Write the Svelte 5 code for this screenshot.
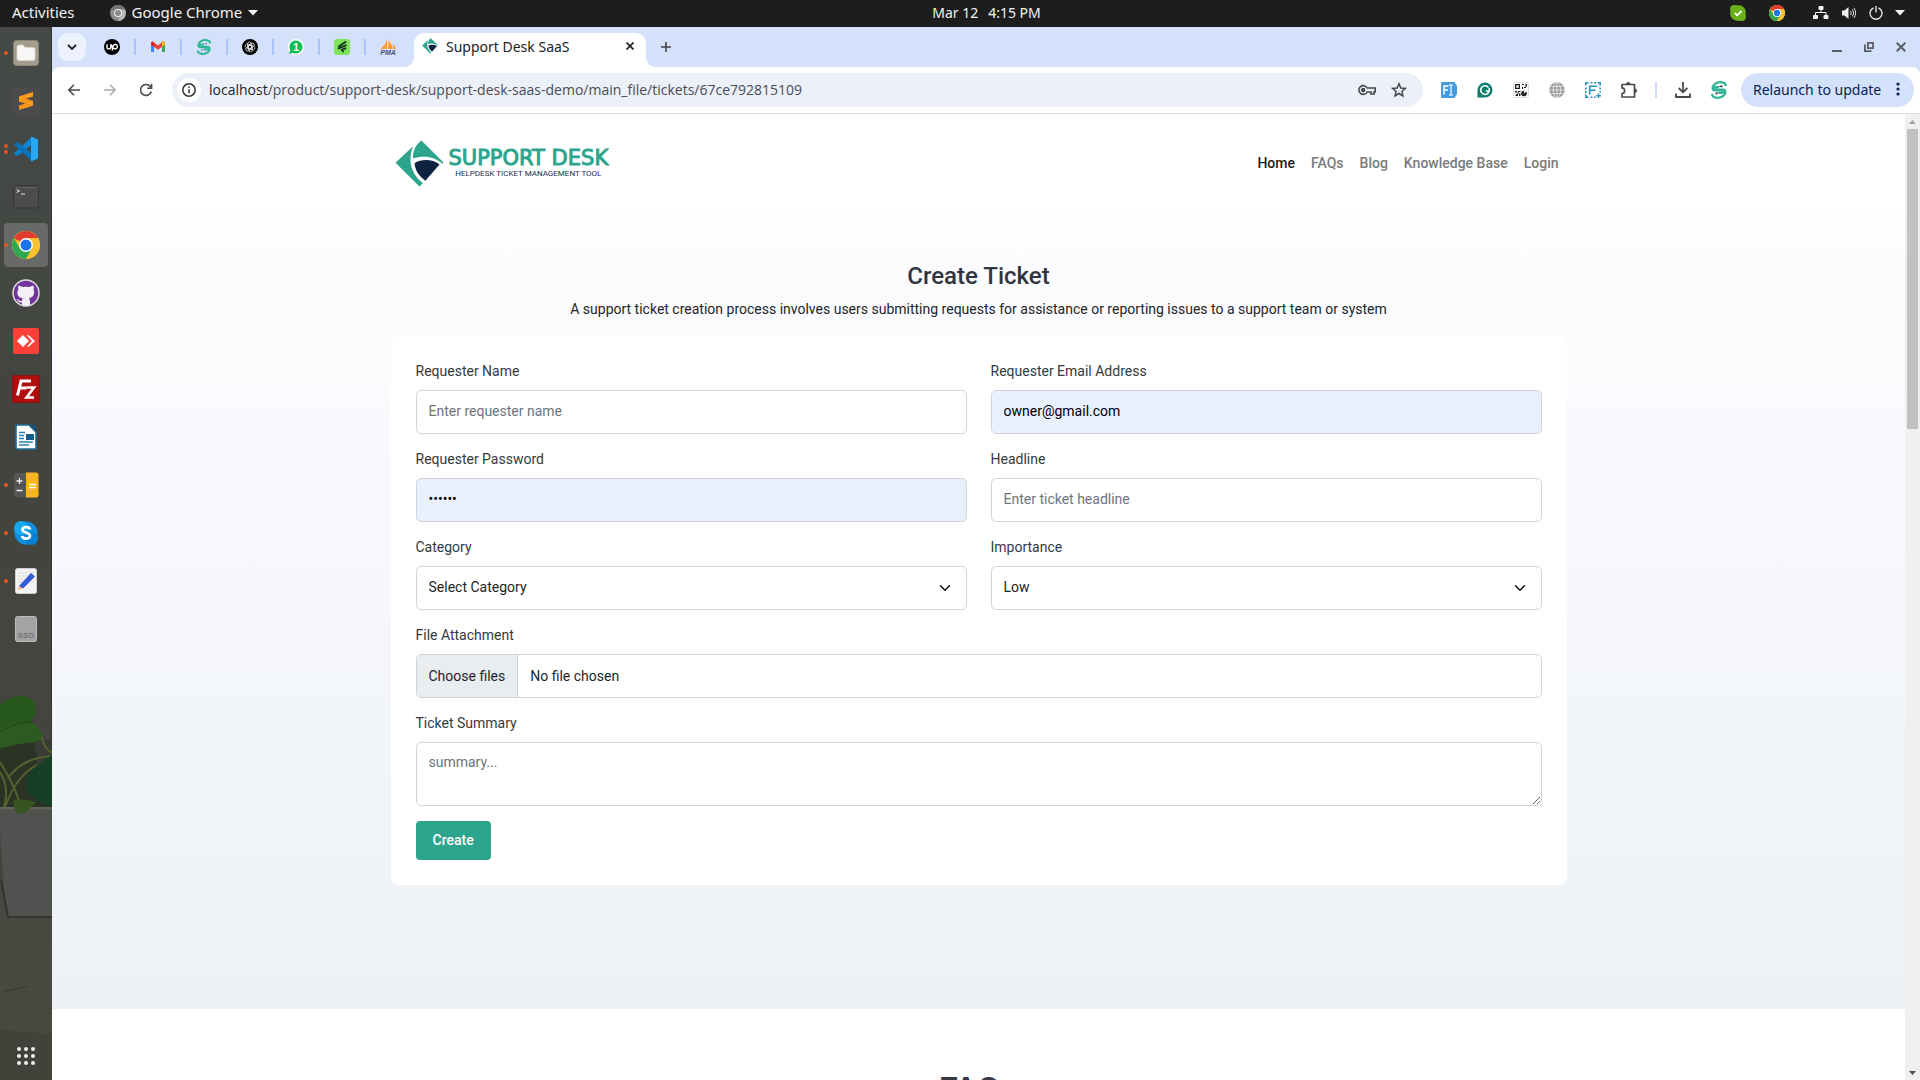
<script lang="ts">
  const pinned = ["upwork", "gmail", "sdesk", "gpt", "whatsapp", "envato", "pma"];

  const dock = [
    { name: "files", dots: 1 },
    { name: "sublime", dots: 0 },
    { name: "vscode", dots: 2 },
    { name: "terminal", dots: 0 },
    { name: "chrome", dots: 1 },
    { name: "github", dots: 0 },
    { name: "anydesk", dots: 0 },
    { name: "filezilla", dots: 0 },
    { name: "writer", dots: 0 },
    { name: "calculator", dots: 1 },
    { name: "skype", dots: 1 },
    { name: "editor", dots: 1 },
    { name: "ssd", dots: 0 },
  ];

  const extensions = ["fonts", "grammar", "qr", "globe", "capture", "puzzle"];
  const nav = ["Home", "FAQs", "Blog", "Knowledge Base", "Login"];

  let name = $state("");
  let email = $state("owner@gmail.com");
  let password = $state("secret");
  let headline = $state("");
  let category = $state("");
  let importance = $state("low");
  let summary = $state("");
  let fileLabel = $state("No file chosen");

  function onFiles(e: Event) {
    const files = (e.currentTarget as HTMLInputElement).files;
    if (!files || files.length === 0) fileLabel = "No file chosen";
    else fileLabel = files.length === 1 ? files[0].name : `${files.length} files`;
  }
</script>

{#snippet chrome(size)}
  <svg width={size} height={size} viewBox="0 0 28 28" aria-hidden="true">
    <circle cx="14" cy="14" r="14" fill="#fbc02d" />
    <path d="M14 14 1.9 7A14 14 0 0 1 26.1 7Z" fill="#e33b2e" />
    <path d="M1.9 7A14 14 0 0 0 14 28L20.1 17.5 14 14 7.9 17.5Z" fill="#2da94f" />
    <path d="M14 7H26.1A14 14 0 0 1 14 28L20.1 17.5Z" fill="#fbc02d" />
    <circle cx="14" cy="14" r="7" fill="#fff" />
    <circle cx="14" cy="14" r="5.5" fill="#1a73e8" />
  </svg>
{/snippet}

{#snippet mark(size)}
  <svg width={size} height={size} viewBox="0 0 49 48" aria-hidden="true">
    <path d="M27 0 49 22V24C41 16.500 29 14.500 18.500 18.500C18 12 20 5 27 0Z" fill="#2da58e" />
    <path d="M18.500 6 .5 22.700 25 47 28.500 43.500C18 36 12 22 18.500 6Z" fill="#2da58e" />
    <path d="M20 23.300C26 19 38 18.500 45.500 24.500L31 41C25 37 20.500 31 20 23.300Z" fill="#0d2240" />
  </svg>
{/snippet}

{#snippet sglyph(size, ink)}
  <svg width={size} height={size} viewBox="0 0 16 16" fill="none" stroke="#31b596" stroke-width="2" aria-hidden="true">
    <path d="M14 4.500C14.500.500 8 .500 5 2.200 1.500 4.500 1.500 8.300 4.500 8.300H11.500C13 8.300 13 10.300 11 10.500H8" />
    <path d="M2 11.500C1.500 15.500 8 15.500 11 13.800 14.500 11.500 14.500 7.700 11.500 7.700H4.500C3 7.700 3 5.700 5 5.500H8" />
    <path d="M7.500 4.800 11 3.500V5.800ZM5 10.200H8.500L5 12.500Z" fill={ink} stroke="none" />
  </svg>
{/snippet}

{#snippet favicon(id)}
  {#if id === "upwork"}
    <svg width="16" height="16" viewBox="0 0 16 16"><circle cx="8" cy="8" r="8" fill="#000" /><path d="M3 5.300V8a1.900 1.900 0 0 0 3.800 0V5.300C7.500 7.500 8.500 9.200 10.500 9.700A2.200 2.200 0 1 0 9 7.300L8.200 11.700" fill="none" stroke="#fff" stroke-width="1.400" /></svg>
  {:else if id === "gmail"}
    <svg width="16" height="16" viewBox="0 0 16 16"><path d="M1 4V13H4V5Z" fill="#4285f4" /><path d="M15 4V13H12V5Z" fill="#34a853" /><path d="M1 3.500 2.500 2 8 6.500 13.500 2 15 3.500V5.500L8 10.700 1 5.500Z" fill="#ea4335" /><path d="M12 3.300 13.500 2 15 3.500V5.500L12 7.700Z" fill="#fbbc04" /><path d="M1 3.500 4 4V7.700L1 5.500Z" fill="#c5221f" /></svg>
  {:else if id === "sdesk"}
    {@render sglyph(16, "#7a9ab5")}
  {:else if id === "gpt"}
    <svg width="16" height="16" viewBox="0 0 16 16"><circle cx="8" cy="8" r="8" fill="#000" /><g fill="none" stroke="#ddd" stroke-width=".8"><rect x="5.500" y="3" width="4" height="7" rx="2" /><rect x="5.500" y="3" width="4" height="7" rx="2" transform="rotate(60 8 8)" /><rect x="5.500" y="3" width="4" height="7" rx="2" transform="rotate(120 8 8)" /><rect x="5.500" y="3" width="4" height="7" rx="2" transform="rotate(180 8 8)" /><rect x="5.500" y="3" width="4" height="7" rx="2" transform="rotate(240 8 8)" /><rect x="5.500" y="3" width="4" height="7" rx="2" transform="rotate(300 8 8)" /></g></svg>
  {:else if id === "whatsapp"}
    <svg width="16" height="16" viewBox="0 0 16 16"><circle cx="8" cy="8" r="8" fill="#fff" /><path d="M8 1.500A6.500 6.500 0 1 1 4.800 13.700L1 15 2.300 11.200A6.500 6.500 0 0 1 8 1.500Z" fill="#06c152" /><text x="8" y="12" text-anchor="middle" font-family="Liberation Sans, sans-serif" font-size="11" font-weight="700" fill="#fff">1</text></svg>
  {:else if id === "envato"}
    <svg width="16" height="16" viewBox="0 0 16 16"><rect width="16" height="16" rx="3" fill="#80e35a" /><path d="M11.500 3 5 7.200M11.800 6.300 4.500 9.300M11.500 9.300 7.500 10.800M7.800 10.800 9 12.500" fill="none" stroke="#12351c" stroke-width="1.800" stroke-linecap="round" /></svg>
  {:else}
    <svg width="18" height="16" viewBox="0 0 18 16"><path d="M8 0V10H1C4 8 7 5 8 0ZM9.500 2C12 4 13.500 7 13.500 10H9ZM14 5C15.500 6.500 16.500 8 17 10H14Z" fill="#f89c3a" /><text x="9" y="15.500" text-anchor="middle" font-family="Liberation Sans, sans-serif" font-size="7" font-weight="700" font-style="italic" fill="#4a4f77">PMA</text></svg>
  {/if}
{/snippet}

{#snippet extension(id)}
  {#if id === "fonts"}
    <svg width="16" height="16" viewBox="0 0 16 16"><path d="M1 0H13.500L16 4V12L13.500 16H1Q0 16 0 15V1Q0 0 1 0Z" fill="#459bdc" /><path d="M3 12.500V4H7.500M3 8H7" stroke="#fff" stroke-width="1.500" fill="none" /><path d="M8 3H12M8 13H12M10 3V13" stroke="#fff" stroke-width="1.200" fill="none" /></svg>
  {:else if id === "grammar"}
    <svg width="16" height="16" viewBox="0 0 16 16"><path d="M8 .5A7.500 7.500 0 1 1 8 15.500H.5V8A7.500 7.500 0 0 1 8 .5Z" fill="#0b7f6b" /><path d="M11.500 5.500A4.300 4.300 0 1 0 12.200 9H8.800M12.200 6V9" stroke="#fff" stroke-width="1.600" fill="none" /></svg>
  {:else if id === "qr"}
    <svg width="16" height="16" viewBox="0 0 16 16"><rect x=".5" y=".5" width="15" height="15" rx="1" fill="#fafafa" stroke="#ddd" /><g fill="#222"><path d="M2 2H7V7H2ZM3.300 3.300V5.700H5.700V3.300Z" fill-rule="evenodd" /><path d="M9 2H11V3H9ZM9 5H10V7H9ZM12.500 2H14V4.500H13V6H11V5H12.500ZM2 9H4V10.500H2ZM5 9H7.500V10H5ZM3 12H5V14H2.500ZM6 11.500H7.500V14H6ZM4 10.500H6V11.500H4Z" /><circle cx="11" cy="11.500" r="2.800" /></g><path d="M11 11.500V8L14 9Z" fill="#fafafa" /></svg>
  {:else if id === "globe"}
    <svg width="16" height="16" viewBox="0 0 16 16"><circle cx="8" cy="8" r="7.700" fill="#9a9a9a" /><g fill="none" stroke="#e4e4e4" stroke-width=".9"><ellipse cx="8" cy="8" rx="3.700" ry="7.500" /><path d="M8 .5V15.500M.5 8H15.500M1.500 4.500H14.500M1.500 11.500H14.500" /></g></svg>
  {:else if id === "capture"}
    <svg width="16" height="16" viewBox="0 0 16 16" fill="none" stroke="#2894ba" stroke-width="1.600"><path d="M.8 3.500V.8H3.500M5.500.8H7.500M9 .8H11M12.500.8H15.200V3.500M15.200 5.500V7.500M15.200 9V10.500M.8 5.500V7.500M.8 9V11M.8 12.500V15.200H3.500M5.500 15.200H7.500M9 15.200H10.500" /><path d="M4.700 12.500V4.300H12M4.700 8.200H10.500" /><path d="M13.500 11.500V16M11.200 13.700H16" stroke-width="1.400" /></svg>
  {:else}
    <svg width="18" height="18" viewBox="0 0 18 18" fill="none" stroke="#47494d" stroke-width="1.700"><path d="M2 3.500H14.500V16H2V12.600C5.500 12.300 5.500 7.200 2 6.900Z" stroke-linejoin="round" /><path d="M6.300 3.500A2 2 0 0 1 10.300 3.500ZM14.500 7.800A2 2 0 0 1 14.500 11.800Z" fill="#47494d" stroke-width="1" /></svg>
  {/if}
{/snippet}

{#snippet app(id)}
  {#if id === "files"}
    <svg width="26" height="26" viewBox="0 0 26 26"><rect x=".5" y=".5" width="25" height="25" rx="3" fill="#a49d8d" stroke="#8b8475" /><path d="M4 7Q4 5 6 5H10L12 7.500H20Q22 7.500 22 9.500V18.500Q22 20.500 20 20.500H6Q4 20.500 4 18.500Z" fill="#f7f6f4" stroke="#d8d3c9" /></svg>
  {:else if id === "sublime"}
    <svg width="28" height="28" viewBox="0 0 28 28"><rect width="28" height="28" rx="2" fill="#4b4a4c" /><path d="M21 5 7 9.500V14.500L21 19V14L13.500 11.700 21 9.500Z" fill="#ff9c1c" /><path d="M7 14.300 21 18.500V14L14 11.800ZM21 14V18.700L7 23V18.500L14 16.200Z" fill="#f7941e" /></svg>
  {:else if id === "vscode"}
    <svg width="26" height="26" viewBox="0 0 26 26"><path d="M18.500 1 1 17.500 3 19.500 4.500 20 19 8.500Z" fill="#0b83cf" /><path d="M18.500 25 1 8.500 3 6.500 4.500 6 19 17.500Z" fill="#0a73b8" /><path d="M19 8.500V1L25 3.500V22.500L19 25V17.500Z" fill="#2aa7f2" /><path d="M18 1 19.500.5V25.500L18 25Z" fill="#2aa7f2" /></svg>
  {:else if id === "terminal"}
    <svg width="26" height="24" viewBox="0 0 26 24"><rect x=".5" y="1" width="25" height="22" rx="2" fill="#4c4c4c" stroke="#353535" /><path d="M1.500 2.500H24.500" stroke="#666" /><path d="M3.500 4.500 6.500 6 3.500 7.500M8 9H12" stroke="#ddd" fill="none" /></svg>
  {:else if id === "chrome"}
    {@render chrome(28)}
  {:else if id === "github"}
    <svg width="28" height="28" viewBox="0 0 28 28"><circle cx="14" cy="14" r="13" fill="#70349a" stroke="#ddd" stroke-width="1.500" /><path d="M6.500 6.500 11 8Q14 7.300 17 8L21.500 6.500Q22.300 9 21.500 10.500 23 15 20.500 17.500 18.500 19 17 19.300L18 22V26Q14 27.500 10 26V23.500Q7 24 6 22L4.500 20.300Q6.500 20 8 22L10 21.700 10.500 19.300Q4.500 18.500 5.500 12L6.400 10.500Q5.700 9 6.500 6.500Z" fill="#f3eff5" /></svg>
  {:else if id === "anydesk"}
    <svg width="26" height="26" viewBox="0 0 26 26"><rect width="26" height="26" rx="2" fill="#fb4137" /><path d="M4 13 10 7 16 13 10 19Z" fill="#fff" /><path d="M14 7.500 15.500 7 22 13 15.500 19 14 18.500 19 13Z" fill="#fff" /></svg>
  {:else if id === "filezilla"}
    <svg width="28" height="28" viewBox="0 0 28 28"><rect x=".5" y=".5" width="27" height="27" fill="#b00d0d" stroke="#8f0a0a" stroke-dasharray="2 1" /><g fill="none" stroke="#fff" stroke-width="3"><path d="M5.500 20.500 9 6H19M7.500 13H14.500" /><path d="M14.500 12.500H22L14.500 22.500H22" stroke-width="2.600" /></g></svg>
  {:else if id === "writer"}
    <svg width="24" height="26" viewBox="0 0 24 26"><path d="M3 1H15L22 8V24Q22 25 21 25H3Q2 25 2 24V2Q2 1 3 1Z" fill="#fff" stroke="#1f6b99" stroke-width="1.600" /><path d="M15 1H22V8Z" fill="#165379" /><path d="M5 8.500H11M5 11.500H10M5 14.500H10M5 18H19M5 21H15" stroke="#2f82b1" stroke-width="1.400" /><rect x="12" y="10" width="8" height="6" fill="#175c88" /></svg>
  {:else if id === "calculator"}
    <svg width="26" height="26" viewBox="0 0 26 26"><rect x=".5" y=".5" width="25" height="25" rx="3" fill="#565656" stroke="#444" /><path d="M13 .5H23Q25.500.5 25.500 3V23Q25.500 25.500 23 25.500H13Z" fill="#fbb51c" /><path d="M1 13H13" stroke="#444" /><path d="M6.500 6V12M3.500 9H9.500M3.500 18.500H9.500" stroke="#eee" stroke-width="1.300" /><path d="M16 12.500H23M16 15.500H23" stroke="#fff" stroke-width="1.300" /></svg>
  {:else if id === "skype"}
    <svg width="26" height="26" viewBox="0 0 26 26"><circle cx="13" cy="13" r="11.500" fill="#0d8fdd" /><circle cx="8" cy="8" r="7" fill="#18a8f0" /><circle cx="18.500" cy="18.500" r="6.500" fill="#0a82d2" /><path d="M17 9.500C16.500 6.500 9.500 6.300 9.500 9.800 9.500 13 17 12 17 15.800 17 19.500 9.500 19.300 9 16" fill="none" stroke="#fff" stroke-width="2.700" /></svg>
  {:else if id === "editor"}
    <svg width="24" height="26" viewBox="0 0 24 26"><rect x="1.500" y=".5" width="21" height="25" rx="2" fill="#f3f3f3" stroke="#cfcfcf" /><path d="M4 5H20M4 8H20M4 11H20M4 14H20" stroke="#ddd" /><path d="M5 18 17 5 21 8.500 9 20.500Z" fill="#2f5bd7" /><path d="M5 18 9 20.500 3.500 22Z" fill="#e9b98d" /></svg>
  {:else}
    <svg width="24" height="26" viewBox="0 0 24 26"><rect x="1.500" y=".5" width="21" height="25" rx="2" fill="#a3a3a3" stroke="#bcbcbc" /><text x="12" y="22" text-anchor="middle" font-family="Liberation Sans, sans-serif" font-size="8" font-weight="700" fill="#777">SSD</text></svg>
  {/if}
{/snippet}

<div class="desktop">
  <!-- system bar -->
  <header class="system">
    <div class="system-left">
      <button class="plain">Activities</button>
      <button class="plain app-menu">
        <svg width="16" height="16" viewBox="0 0 16 16"><circle cx="8" cy="8" r="8" fill="#8c8c8c" /><path d="M8 8 1 4A8 8 0 0 1 15 4Z" fill="#747474" /><path d="M8 4.500H15A8 8 0 0 1 8 16L11 10Z" fill="#b8b8b8" /><circle cx="8" cy="8" r="4" fill="#eee" /><circle cx="8" cy="8" r="3" fill="#8a8a8a" /></svg>
        Google Chrome
        <svg width="10" height="6" viewBox="0 0 10 6"><path d="M0 0H10L5 5.500Z" fill="#f2f2f2" /></svg>
      </button>
    </div>
    <button class="plain clock"><span>Mar 12</span><span>4:15 PM</span></button>
    <div class="system-right">
      <svg class="tray" width="16" height="16" viewBox="0 0 16 16"><path d="M4.500 0Q7 .500 9 .300A6.700 6.700 0 0 1 15.700 7.500Q15.500 9.500 16 12A4 4 0 0 1 11.500 16Q9 15.500 7 15.700A6.700 6.700 0 0 1 .300 8.500Q.500 6.500 0 4A4 4 0 0 1 4.500 0Z" fill="#69b01a" /><path d="M4.800 8 7.200 10.300 11.500 6" fill="none" stroke="#fff" stroke-width="1.800" /></svg>
      <span class="tray chrome-tray">{@render chrome(16)}</span>
      <svg width="16" height="14" viewBox="0 0 16 14" fill="#f2f2f2"><rect x="5.500" width="5" height="4" rx="1" /><rect y="9" width="5" height="4" rx="1" /><rect x="10.500" y="9" width="5" height="4" rx="1" /><path d="M8 4V6.500M2.500 9V6.500H13V9" fill="none" stroke="#f2f2f2" /></svg>
      <svg width="16" height="14" viewBox="0 0 16 14"><path d="M1 4.500H3.500L7.500 1V13L3.500 9.500H1Z" fill="#f2f2f2" /><path d="M9.500 5Q11 7 9.500 9M11.500 3.500Q13.800 7 11.500 10.500M13 2Q16.300 7 13 12" fill="none" stroke="#ddd" /></svg>
      <svg width="14" height="14" viewBox="0 0 14 14" fill="none" stroke="#f2f2f2" stroke-width="1.300"><path d="M4.500 1.800A6 6 0 1 0 9.500 1.800M7 0V6.500" /></svg>
      <svg width="10" height="6" viewBox="0 0 10 6"><path d="M0 0H10L5 5.500Z" fill="#f2f2f2" /></svg>
    </div>
  </header>

  <div class="workspace">
    <aside class="dock">
      <!-- wallpaper showing through the dock -->
      <svg class="plant" width="52" height="390" viewBox="0 0 52 390" aria-hidden="true">
        <path d="M0 50H52V118H0Z" fill="#2b3324" />
        <path d="M34 50H52V76H38Z" fill="#393b37" />
        <path d="M0 72C12 92 18 104 20 117M5 117C14 92 27 76 50 70M8 88C20 72 34 68 50 66M41 46C44 56 48 62 52 62M0 82C6 92 8 104 4 117" fill="none" stroke="#55602f" stroke-width="2" />
        <path d="M0 15C10 4 30 3 35 14 38 25 32 34 20 40 12 38 4 40 0 44Z" fill="#27591c" />
        <path d="M0 40C14 28 36 26 42 45 42 54 30 52 20 54 12 55 6 58 0 58Z" fill="#2d5a20" />
        <path d="M0 42C12 34 22 32 34 32" fill="none" stroke="#1d4315" />
        <path d="M52 66C40 70 24 84 26 98 30 108 43 116 52 116Z" fill="#173f26" />
        <path d="M0 118H52V228H7C3 185 0 160 0 118Z" fill="#4f524f" />
        <path d="M0 118H52" stroke="#62635b" stroke-width="2" />
        <path d="M13 110C20 108 28 110 36 112 30 120 22 126 18 123 14 120 14 115 13 110Z" fill="#35541e" />
        <path d="M0 185 7 227H52V390H0Z" fill="#484740" />
        <path d="M1 190 8 227H52" fill="none" stroke="#35352f" stroke-width="2" />
        <path d="M3 302 28 296" stroke="#3b3932" />
        <path d="M0 340 52 344V390H0Z" fill="#41423a" />
      </svg>
      {#each dock as item}
        <button class="dock-item" class:active={item.name === "chrome"} aria-label={item.name}>
          <span class="dots">
            {#each Array(item.dots) as _}<i></i>{/each}
          </span>
          {@render app(item.name)}
        </button>
      {/each}
      <button class="dock-item apps" aria-label="show applications">
        <svg width="18" height="18" viewBox="0 0 18 18" fill="#eee">
          {#each [2, 9, 16] as y}
            {#each [2, 9, 16] as x}<circle cx={x} cy={y} r="2" />{/each}
          {/each}
        </svg>
      </button>
    </aside>

    <div class="browser">
      <div class="tabs">
        <button class="tab-search" aria-label="search tabs">
          <svg width="10" height="6" viewBox="0 0 10 6"><path d="M1 1 5 5 9 1" fill="none" stroke="#222" stroke-width="1.800" /></svg>
        </button>
        <div class="pinned">
          {#each pinned as id}
            <button class="pin" aria-label={id}>{@render favicon(id)}</button>
          {/each}
        </div>
        <div class="tab">
          {@render mark(16)}
          <span class="tab-title">Support Desk SaaS</span>
          <button class="plain tab-close" aria-label="close tab">
            <svg width="8" height="8" viewBox="0 0 8 8"><path d="M.5.5 7.500 7.500M7.500.5.5 7.500" stroke="#222" stroke-width="1.700" /></svg>
          </button>
        </div>
        <button class="plain new-tab" aria-label="new tab">
          <svg width="10" height="10" viewBox="0 0 10 10"><path d="M5 0V10M0 5H10" stroke="#444" stroke-width="1.600" /></svg>
        </button>
        <div class="window-buttons">
          <button class="plain" aria-label="minimize"><svg width="10" height="10" viewBox="0 0 10 10"><path d="M0 9H10" stroke="#5a5e66" stroke-width="2" /></svg></button>
          <button class="plain" aria-label="restore"><svg width="10" height="10" viewBox="0 0 10 10" fill="none" stroke="#5a5e66" stroke-width="1.800"><path d="M3.900.9H9.100V6.100H3.900ZM.9 2.500V9.100H7.500" /></svg></button>
          <button class="plain" aria-label="close"><svg width="10" height="10" viewBox="0 0 10 10"><path d="M.7.7 9.300 9.300M9.300.7.7 9.300" stroke="#5a5e66" stroke-width="2" /></svg></button>
        </div>
      </div>

      <div class="toolbar">
        <div class="history">
          <button class="plain" aria-label="back"><svg width="12" height="12" viewBox="0 0 12 12" fill="none" stroke="#47494d" stroke-width="1.500"><path d="M12 6H1M6 .8.900 6 6 11.200" /></svg></button>
          <button class="plain" aria-label="forward"><svg width="12" height="12" viewBox="0 0 12 12" fill="none" stroke="#a9abae" stroke-width="1.500"><path d="M0 6H11M6 .8 11.100 6 6 11.200" /></svg></button>
          <button class="plain" aria-label="reload"><svg width="14" height="14" viewBox="0 0 14 14" fill="none" stroke="#47494d" stroke-width="1.600"><path d="M12.300 8.500A5.500 5.500 0 1 1 11.300 3.500L12.500 5M12.600.8V5.200H8.200" /></svg></button>
        </div>
        <div class="omnibox">
          <button class="plain info" aria-label="site information"><svg width="14" height="14" viewBox="0 0 14 14" fill="none" stroke="#333" stroke-width="1.500"><circle cx="7" cy="7" r="6.200" /><path d="M7 6.300V10.300M7 3.600V5.100" /></svg></button>
          <span class="url"><b>localhost</b>/product/support-desk/support-desk-saas-demo/main_file/tickets/67ce792815109</span>
          <button class="plain" aria-label="manage passwords"><svg width="18" height="12" viewBox="0 0 18 12" fill="none" stroke="#47494d" stroke-width="1.600"><path d="M9.200 4A4.400 4.400 0 1 0 9.200 8H13V10H16V8H17.200V4Z" /><circle cx="5.200" cy="6" r="1.400" fill="#47494d" /></svg></button>
          <button class="plain" aria-label="bookmark"><svg width="16" height="16" viewBox="0 0 16 16" fill="none" stroke="#47494d" stroke-width="1.500"><path d="M8 1.800 9.800 6 14.300 6.400 10.900 9.400 11.900 13.900 8 11.500 4.100 13.900 5.100 9.400 1.700 6.400 6.200 6Z" /></svg></button>
        </div>
        <div class="extensions">
          {#each extensions as id}
            <button class="plain ext" aria-label={id}>{@render extension(id)}</button>
          {/each}
        </div>
        <div class="profile">
          <button class="plain ext" aria-label="downloads"><svg width="16" height="16" viewBox="0 0 16 16" fill="none" stroke="#47494d" stroke-width="1.800"><path d="M8 0V10M3.700 6 8 10.300 12.300 6M1 11.500V15H15V11.500" /></svg></button>
          <button class="plain ext" aria-label="profile">{@render sglyph(18, "#174a4a")}</button>
        </div>
        <button class="relaunch">
          Relaunch to update
          <svg width="4" height="14" viewBox="0 0 4 14" fill="#0b2253"><circle cx="2" cy="2" r="1.600" /><circle cx="2" cy="7" r="1.600" /><circle cx="2" cy="12" r="1.600" /></svg>
        </button>
      </div>

      <div class="view">
        <div class="page">
          <header class="site-header">
            <div class="container header-row">
              <a class="logo" href="#home">
                {@render mark(48)}
                <span class="logo-text">
                  <span class="brand">SUPPORT DESK</span>
                  <span class="tagline">HELPDESK TICKET MANAGEMENT TOOL</span>
                </span>
              </a>
              <nav>
                {#each nav as item, i}
                  <a href="#nav" class:current={i === 0}>{item}</a>
                {/each}
              </nav>
            </div>
          </header>

          <section class="ticket">
            <div class="container">
              <h1>Create Ticket</h1>
              <p class="lead">A support ticket creation process involves users submitting requests for assistance or reporting issues to a support team or system</p>

              <form class="card" onsubmit={(e) => e.preventDefault()}>
                <div class="field">
                  <label for="name">Requester Name</label>
                  <input id="name" type="text" placeholder="Enter requester name" bind:value={name} />
                </div>
                <div class="field">
                  <label for="email">Requester Email Address</label>
                  <input id="email" class="filled" type="email" bind:value={email} />
                </div>
                <div class="field">
                  <label for="password">Requester Password</label>
                  <input id="password" class="filled" type="password" bind:value={password} />
                </div>
                <div class="field">
                  <label for="headline">Headline</label>
                  <input id="headline" type="text" placeholder="Enter ticket headline" bind:value={headline} />
                </div>
                <div class="field">
                  <label for="category">Category</label>
                  <select id="category" bind:value={category}>
                    <option value="">Select Category</option>
                  </select>
                </div>
                <div class="field">
                  <label for="importance">Importance</label>
                  <select id="importance" bind:value={importance}>
                    <option value="low">Low</option>
                    <option value="medium">Medium</option>
                    <option value="high">High</option>
                  </select>
                </div>
                <div class="field wide">
                  <label for="attachment">File Attachment</label>
                  <label class="file">
                    <input id="attachment" type="file" multiple onchange={onFiles} />
                    <span class="choose">Choose files</span>
                    <span class="chosen">{fileLabel}</span>
                  </label>
                </div>
                <div class="field wide">
                  <label for="summary">Ticket Summary</label>
                  <textarea id="summary" placeholder="summary..." bind:value={summary}></textarea>
                </div>
                <div class="wide">
                  <button class="create" type="submit">Create</button>
                </div>
              </form>
            </div>
          </section>

          <section class="faq">
            <h2>FAQs</h2>
          </section>
        </div>

        <div class="scrollbar" aria-hidden="true">
          <svg width="15" height="15" viewBox="0 0 15 15"><path d="M4 10 7.500 6 11 10Z" fill="#a3a3a3" /></svg>
          <div class="rail"><div class="thumb"></div></div>
          <svg width="15" height="15" viewBox="0 0 15 15"><path d="M4 6 7.500 10 11 6Z" fill="#505050" /></svg>
        </div>
      </div>
    </div>
  </div>
</div>

<style>
  :global(body) { margin: 0; }

  .desktop {
    --ui: "Noto Sans", "Open Sans", sans-serif;
    --accent: #2da58e;
    --line: #d0d5dc;

    height: 100vh;
    display: flex;
    flex-direction: column;
    overflow: hidden;
    font-family: Roboto, sans-serif;
    font-size: 14px;
    line-height: 21px;
    color: #212529;
    background: #fff;
  }
  .desktop *, .desktop *::before, .desktop *::after { box-sizing: border-box; }
  svg { display: block; flex: none; }

  button { font: inherit; color: inherit; }
  .plain { border: 0; padding: 0; background: none; display: flex; align-items: center; justify-content: center; }

  /* system bar */
  .system {
    flex: none;
    height: 27px;
    display: grid;
    grid-template-columns: 1fr auto 1fr;
    align-items: center;
    padding: 0 15px 2px 12px;
    background: #1d1d1d;
    color: #f2f2f2;
    font-family: var(--ui);
  }
  .system-left { display: flex; gap: 35px; font-size: 15px; }
  .app-menu { gap: 6px; }
  .clock { gap: 10px; padding-left: 56px; }
  .system-right { display: flex; align-items: center; justify-content: flex-end; gap: 12px; }
  .tray { margin-right: 11px; }
  .chrome-tray { margin-right: 16px; }

  .workspace { flex: 1; min-height: 0; display: flex; }

  /* dock */
  .dock {
    position: relative;
    flex: none;
    width: 52px;
    padding: 4px;
    display: flex;
    flex-direction: column;
    gap: 4px;
    background: linear-gradient(#464a47, #41443e 40%, #45453f 60%, #41423a);
    border-right: 1px solid #343630;
  }
  .plant { position: absolute; left: 0; bottom: 0; }
  .dock-item {
    position: relative;
    width: 44px;
    height: 44px;
    display: flex;
    align-items: center;
    justify-content: center;
    border: 0;
    padding: 0;
    border-radius: 4px;
    background: none;
  }
  .dock-item.active { background: #686a67; }
  .apps { margin-top: auto; margin-bottom: -2px; }
  .dots { position: absolute; left: 0; top: 0; bottom: 0; display: flex; flex-direction: column; justify-content: center; gap: 2px; }
  .dots i { width: 4px; height: 4px; border-radius: 50%; background: #e95420; }

  .browser { flex: 1; min-width: 0; display: flex; flex-direction: column; background: #d4e1fb; }

  /* tab strip */
  .tabs { flex: none; height: 40px; padding: 6px 14px 0 6px; display: flex; font-family: var(--ui); }
  .tab-search { width: 28px; height: 28px; display: grid; place-items: center; border: 0; border-radius: 10px; background: #ebf1fd; padding: 0; }
  .pinned { display: flex; margin-left: 4px; }
  .pin {
    width: 46px;
    height: 16px;
    margin-top: 6px;
    display: grid;
    place-items: center;
    border: 0;
    border-right: 2px solid #a9c5f7;
    padding: 0;
    background: none;
  }
  .pin:last-child { border-right-color: transparent; }
  .tab {
    position: relative;
    width: 232px;
    margin-left: 2px;
    padding: 0 12px 8px 8px;
    display: flex;
    align-items: center;
    gap: 8px;
    border-radius: 10px 10px 0 0;
    background: #fff;
    color: #222;
  }
  .tab::before, .tab::after { content: ""; position: absolute; bottom: 0; width: 10px; height: 10px; }
  .tab::before { right: 100%; background: radial-gradient(circle at 0 0, transparent 10px, #fff 10px); }
  .tab::after { left: 100%; background: radial-gradient(circle at 100% 0, transparent 10px, #fff 10px); }
  .tab-title { flex: 1; white-space: nowrap; }
  .new-tab { width: 28px; height: 28px; margin-left: 6px; }
  .window-buttons { margin-left: auto; height: 28px; display: flex; gap: 22px; }

  /* toolbar */
  .toolbar {
    flex: none;
    height: 47px;
    padding: 0 6px 0 12px;
    display: flex;
    align-items: center;
    border-bottom: 1px solid #dcdee1;
    border-radius: 8px 8px 0 0;
    background: #fff;
    font-family: var(--ui);
  }
  .history { display: flex; gap: 16px; margin-right: 16px; }
  .history button { width: 20px; height: 20px; }
  .omnibox {
    flex: 1;
    min-width: 0;
    height: 34px;
    padding: 0 16px 0 5px;
    display: flex;
    align-items: center;
    gap: 15px;
    border-radius: 17px;
    background: #ecf0f9;
  }
  .info { width: 24px; height: 24px; border-radius: 50%; background: #fff; }
  .url { flex: 1; min-width: 0; margin-left: -7px; padding-bottom: 2px; overflow: hidden; white-space: nowrap; font-family: "Open Sans", sans-serif; color: #4b4d52; }
  .url b { font-weight: 400; color: #1f1f1f; }
  .extensions, .profile { display: flex; gap: 16px; }
  .extensions { margin-left: 16px; }
  .profile { margin-left: 16px; padding-left: 18px; position: relative; }
  .profile::before { content: ""; position: absolute; left: 0; top: 2px; width: 2px; height: 16px; background: #d0dffb; }
  .ext { width: 20px; height: 20px; }
  .relaunch {
    height: 34px;
    width: 173px;
    margin-left: 12px;
    padding: 0 14px 2px 12px;
    display: flex;
    align-items: center;
    justify-content: space-between;
    border: 0;
    border-radius: 17px;
    background: #d4e1fb;
    color: #0b2253;
    white-space: nowrap;
  }

  .view { flex: 1; min-height: 0; display: flex; background: #fff; }
  .page { flex: 1; min-width: 0; overflow: hidden; }

  .scrollbar { flex: none; width: 15px; display: flex; flex-direction: column; background: #f0f0f0; }
  .rail { flex: 1; padding: 0 2px; }
  .thumb { height: 32%; background: #c1c1c1; }

  /* site */
  .container { max-width: 1200px; margin: 0 auto; padding: 0 12px; }
  .header-row { height: 100px; display: flex; align-items: center; justify-content: space-between; }
  .logo { display: flex; align-items: center; gap: 6px; padding-left: 4px; text-decoration: none; }
  .logo-text { display: flex; flex-direction: column; align-items: center; }
  .brand { font: 21px/20px "DejaVu Sans", sans-serif; color: var(--accent); -webkit-text-stroke: 1px var(--accent); }
  .tagline { font-size: 8px; line-height: 12px; color: #1d2c4d; }
  nav { display: flex; gap: 16px; padding: 0 8px 2px 0; }
  nav a { color: #7b7b7b; font-weight: 500; text-decoration: none; }
  nav a.current { color: #1c1c1c; }

  .ticket { padding: 48px 0 124px; background: linear-gradient(#fdfdff, #edf1f5); }
  h1 { margin: 0 0 8px; font-size: 24px; line-height: 29px; font-weight: 500; text-align: center; color: #313540; }
  .lead { margin: 0 0 16px; text-align: center; }

  .card {
    display: grid;
    grid-template-columns: 1fr 1fr;
    gap: 15px 24px;
    padding: 25px;
    border-radius: 8px;
    background: #fff;
  }
  .wide { grid-column: 1 / -1; }
  .field { display: flex; flex-direction: column; gap: 8px; }
  .field > label { color: #343a40; }

  input, select, textarea, .file {
    width: 100%;
    height: 44px;
    margin: 0;
    padding: 0 12px;
    border: 1px solid var(--line);
    border-radius: 5px;
    background: #fff;
    color: #212529;
    font: inherit;
    outline: none;
  }
  input { padding-bottom: 2px; }
  input::placeholder, textarea::placeholder { color: #6c757d; opacity: 1; }
  .filled { background: #e8f0fe; color: #000; }
  select {
    appearance: none;
    padding-bottom: 2px;
    background: #fff url("data:image/svg+xml,%3Csvg xmlns='http://www.w3.org/2000/svg' viewBox='0 0 16 16'%3E%3Cpath fill='none' stroke='%23111' stroke-linecap='round' stroke-linejoin='round' stroke-width='2' d='m2 5 6 6 6-6'/%3E%3C/svg%3E") no-repeat right 13px center / 16px 12px;
  }
  textarea { display: block; height: 64px; padding: 9px 12px; resize: vertical; }
  .field > .file { position: relative; display: flex; padding: 0; overflow: hidden; line-height: 42px; color: #212529; }
  .file input { position: absolute; inset: 0; height: 100%; opacity: 0; }
  .choose { padding: 0 12px; border-right: 1px solid var(--line); background: #e9edf0; }
  .chosen { padding: 0 12px; }

  .create {
    display: block;
    height: 39px;
    padding: 0 17px;
    border: 0;
    border-radius: 4px;
    background: var(--accent);
    color: #fff;
    font-weight: 500;
  }

  .faq { padding-top: 60px; }
  h2 { margin: 0; font-size: 34px; line-height: 40px; font-weight: 700; text-align: center; color: #373944; }
</style>
